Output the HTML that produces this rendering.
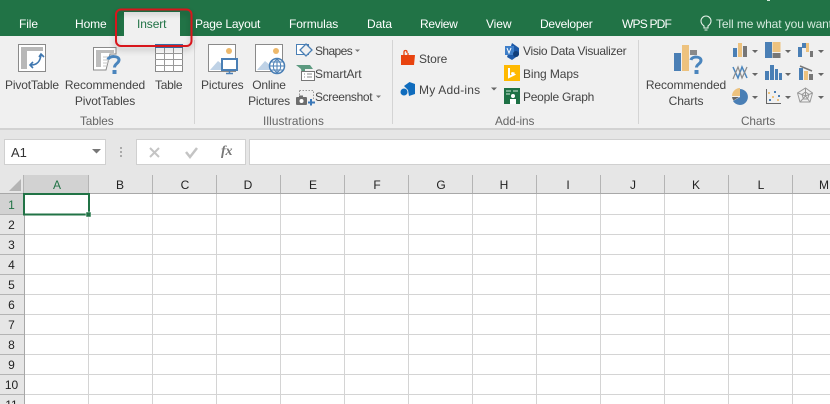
<!DOCTYPE html>
<html><head><meta charset="utf-8">
<style>
html,body{margin:0;padding:0;width:830px;height:404px;overflow:hidden}
#p{position:absolute;left:0;top:0;width:830px;height:404px;overflow:hidden;background:#e6e6e6;font-family:"Liberation Sans",sans-serif;font-size:12px;color:#444}
#p div{position:absolute}
.t{white-space:nowrap;line-height:16px;letter-spacing:-.1px}
.w{color:#fff;top:16px;font-size:12px}
.c{text-align:center}
.g{color:#666;top:113px;font-size:11.8px}
.h{top:176px;height:18px;line-height:18px;width:64px;text-align:center;color:#222;font-size:12px}
.r{left:0;width:23px;height:20px;line-height:23px;text-align:center;color:#222;font-size:12px}
svg{position:absolute;left:0;top:0}
</style></head><body><div id="p">
<div style="left:0;top:0;width:830px;height:36px;background:#217346"></div>
<div style="left:0;top:36px;width:830px;height:92px;background:#f0f0f0"></div>
<div style="left:0;top:128px;width:830px;height:2px;background:#d2d2d2"></div>
<div style="left:124px;top:12px;width:56px;height:24px;background:#f0f0f0"></div>
<div style="left:194px;top:40px;width:1px;height:84px;background:#d4d4d4"></div>
<div style="left:392px;top:40px;width:1px;height:84px;background:#d4d4d4"></div>
<div style="left:638px;top:40px;width:1px;height:84px;background:#d4d4d4"></div>

<div class="t w" style="left:19px">File</div>
<div class="t w" style="left:75px">Home</div>
<div class="t w" style="left:137px;color:#217346">Insert</div>
<div class="t w" style="left:195px;letter-spacing:-.2px">Page Layout</div>
<div class="t w" style="left:289px">Formulas</div>
<div class="t w" style="left:367px">Data</div>
<div class="t w" style="left:420px;letter-spacing:-.3px">Review</div>
<div class="t w" style="left:486px">View</div>
<div class="t w" style="left:540px;letter-spacing:-.25px">Developer</div>
<div class="t w" style="left:622px;letter-spacing:-.8px">WPS PDF</div>
<div class="t w" style="left:716px;color:#d5eadd">Tell me what you want</div>

<div class="t" style="left:5px;top:77px;letter-spacing:-.15px">PivotTable</div>
<div class="t c" style="left:60px;top:77px;width:90px">Recommended<br>PivotTables</div>
<div class="t" style="left:155px;top:77px;letter-spacing:-.3px">Table</div>
<div class="t" style="left:201px;top:77px">Pictures</div>
<div class="t c" style="left:243px;top:77px;width:52px;letter-spacing:-.2px">Online<br>Pictures</div>
<div class="t" style="left:315px;top:43px;letter-spacing:-.6px">Shapes</div>
<div class="t" style="left:315px;top:66px">SmartArt</div>
<div class="t" style="left:315px;top:89px;letter-spacing:-.35px">Screenshot</div>
<div class="t" style="left:419px;top:51px">Store</div>
<div class="t" style="left:419px;top:82px;letter-spacing:.2px">My Add-ins</div>
<div class="t" style="left:523px;top:43px;letter-spacing:-.3px">Visio Data Visualizer</div>
<div class="t" style="left:523px;top:66px">Bing Maps</div>
<div class="t" style="left:523px;top:89px;letter-spacing:-.25px">People Graph</div>
<div class="t c" style="left:640px;top:77px;width:92px">Recommended<br>Charts</div>

<div class="t g" style="left:80px">Tables</div>
<div class="t g" style="left:263px;letter-spacing:.1px">Illustrations</div>
<div class="t g" style="left:495px">Add-ins</div>
<div class="t g" style="left:741px">Charts</div>

<!-- formula bar -->
<div style="left:4px;top:139px;width:100px;height:24px;background:#fff;border:1px solid #d0d0d0"></div>
<div class="t" style="left:11px;top:145px;font-size:13px;color:#333">A1</div>
<div style="left:136px;top:139px;width:108px;height:24px;background:#fff;border:1px solid #d0d0d0"></div>
<div style="left:249px;top:139px;width:581px;height:24px;background:#fff;border-top:1px solid #d0d0d0;border-bottom:1px solid #d0d0d0;border-left:1px solid #d0d0d0"></div>
<div class="t" style="left:221px;top:144px;font:italic bold 14px 'Liberation Serif',serif;color:#777">fx</div>

<!-- grid -->
<div style="left:0;top:175px;width:830px;height:19px;background:#e6e6e6"></div>
<div style="left:24px;top:175px;width:64px;height:19px;background:#d2d2d2"></div>
<div style="left:0;top:194px;width:24px;height:210px;background:#e6e6e6"></div>
<div style="left:0;top:194px;width:24px;height:20px;background:#d2d2d2"></div>
<div style="left:24px;top:194px;width:806px;height:210px;background:#fff"></div>

<div class="h" style="left:25px;color:#217346">A</div>
<div class="h" style="left:88px">B</div>
<div class="h" style="left:153px">C</div>
<div class="h" style="left:216px">D</div>
<div class="h" style="left:281px">E</div>
<div class="h" style="left:345px">F</div>
<div class="h" style="left:409px">G</div>
<div class="h" style="left:472px">H</div>
<div class="h" style="left:536px">I</div>
<div class="h" style="left:601px">J</div>
<div class="h" style="left:664px">K</div>
<div class="h" style="left:729px">L</div>
<div class="h" style="left:792px">M</div>

<div class="r" style="top:194px;color:#217346">1</div>
<div class="r" style="top:214px">2</div>
<div class="r" style="top:234px">3</div>
<div class="r" style="top:254px">4</div>
<div class="r" style="top:274px">5</div>
<div class="r" style="top:294px">6</div>
<div class="r" style="top:314px">7</div>
<div class="r" style="top:334px">8</div>
<div class="r" style="top:354px">9</div>
<div class="r" style="top:374px">10</div>
<div class="r" style="top:394px">11</div>

<svg width="830" height="404" viewBox="0 0 830 404" fill="none">
<defs><filter id="s" x="-20%" y="-30%" width="140%" height="160%"><feDropShadow dx="0" dy="3" stdDeviation="3" flood-color="#000" flood-opacity=".3"/></filter></defs>

<!-- grid lines -->
<g stroke="#d4d4d4" stroke-width="1">
<path d="M88.500 194V404M152.500 194V404M216.500 194V404M280.500 194V404M344.500 194V404M408.500 194V404M472.500 194V404M536.500 194V404M600.500 194V404M664.500 194V404M728.500 194V404M792.500 194V404"/>
<path d="M24 214.500H830M24 234.500H830M24 254.500H830M24 274.500H830M24 294.500H830M24 314.500H830M24 334.500H830M24 354.500H830M24 374.500H830M24 394.500H830"/>
</g>
<g stroke="#b4b4b4"><path d="M152.500 175V193M216.500 175V193M280.500 175V193M344.500 175V193M408.500 175V193M472.500 175V193M536.500 175V193M600.500 175V193M664.500 175V193M728.500 175V193M792.500 175V193M88.500 175V193M23.500 175V193"/>
<path d="M0 214.500H24M0 234.500H24M0 254.500H24M0 274.500H24M0 294.500H24M0 314.500H24M0 334.500H24M0 354.500H24M0 374.500H24M0 394.500H24"/></g>
<path d="M0 193.500H830" stroke="#a8a8a8"/><path d="M24.500 194V404" stroke="#a8a8a8"/>
<path d="M9 191L21 179V191Z" fill="#b4b4b4"/>
<rect x="24" y="194" width="65" height="20.500" stroke="#217346" stroke-width="2"/>
<rect x="86" y="212" width="5" height="5" fill="#217346" stroke="#fff" stroke-width=".5"/>

<!-- formula bar glyphs -->
<path d="M92 149h9l-4.500 4.500z" fill="#777"/>
<g fill="#aaa"><rect x="120" y="147" width="2" height="2"/><rect x="120" y="151" width="2" height="2"/><rect x="120" y="155" width="2" height="2"/></g>
<path d="M150 148l9 9M159 148l-9 9" stroke="#c4c4c4" stroke-width="2"/>
<path d="M186 152l4 5 7-9" stroke="#c4c4c4" stroke-width="2.500"/>

<!-- pivot table -->
<rect x="18.500" y="44.500" width="27" height="27" fill="#fff" stroke="#8a8a8a"/>
<path d="M21 47h22v4H27v18h-6z" fill="#b8b8b8"/>
<path d="M31 65c6 0 9-3 10-10M39 57l2-3 3 3M33 62l-3 3 3 3" stroke="#3f77b0" stroke-width="1.600"/>

<!-- recommended pivot -->
<path d="M93.500 47.500H116V54H110L106 70H93.500Z" fill="#fff" stroke="#8a8a8a"/>
<path d="M96 50h18v3H101v14h-5z" fill="#bdbdbd"/><path d="M103 57h8M103 60h6M103 63h5M103 66h3" stroke="#c4c4c4"/>
<path d="M108 59.500c1-4 11-4 11 0.500c0 3.500-4.500 3.500-4.500 7.500" stroke="#4a85bd" stroke-width="3"/>
<rect x="112.500" y="70" width="4" height="4" fill="#4a85bd"/>

<!-- table -->
<rect x="155.500" y="44.500" width="27" height="27" fill="#fff" stroke="#8a8a8a"/>
<rect x="155" y="44" width="28" height="4" fill="#3b6ea5"/>
<path d="M155 53.500H183M155 59.500H183M155 65.500H183M164.500 48V72M173.500 48V72" stroke="#9a9a9a"/>

<!-- pictures -->
<rect x="208.500" y="44.500" width="27" height="27" fill="#fff" stroke="#8a8a8a"/>
<circle cx="229" cy="51" r="3" fill="#edb96c"/>
<path d="M210 70l8-9 5 4 3-2 6 7z" fill="#bfd2e6"/>
<rect x="222" y="59" width="15" height="11" fill="#fff" stroke="#4a7fb5" stroke-width="2"/>
<path d="M229.500 71v2M226 73.500h7" stroke="#4a7fb5" stroke-width="1.500"/>
<!-- online pictures -->
<rect x="255.500" y="44.500" width="27" height="27" fill="#fff" stroke="#8a8a8a"/>
<circle cx="276" cy="51" r="3" fill="#edb96c"/>
<path d="M257 70l8-9 5 4 3-2 6 7z" fill="#bfd2e6"/>
<circle cx="277" cy="66" r="7.500" fill="#fff" stroke="#4a7fb5" stroke-width="1.500"/>
<path d="M270 66h14M271 62h12M271 70h12M277 59v14M277 59c-5 4-5 10 0 14M277 59c5 4 5 10 0 14" stroke="#4a7fb5"/>

<!-- shapes -->
<rect x="296.500" y="44.500" width="12" height="10" stroke="#4a7fb5" fill="#fff"/>
<path d="M306 44l6 6-6 6-6-6z" stroke="#4a7fb5" fill="#f0f0f0" stroke-width="1.300"/>
<path d="M355 49.500h5l-2.500 2.500z" fill="#777"/>
<!-- smartart -->
<path d="M296 65h14l3 4h-8v5h-3l-1-5z" fill="#5c9a80"/>
<rect x="301.500" y="71.500" width="13" height="9" fill="#fff" stroke="#777"/>
<path d="M304 74h1M304 77h1M307 74h5M307 77h5" stroke="#888"/>
<!-- screenshot -->
<path d="M299.500 90.500H313.500V100" stroke="#999" stroke-dasharray="1.500 1.500"/><path d="M299.500 90.500V96" stroke="#999" stroke-dasharray="1.500 1.500"/>
<rect x="296" y="97" width="11" height="8" rx="1" fill="#6e6e6e"/><rect x="299" y="95.500" width="4" height="2" fill="#6e6e6e"/>
<circle cx="301.500" cy="101" r="2" fill="#fff"/>
<path d="M311 99v6.500M308 102.500h7" stroke="#3b78b8" stroke-width="2"/>
<path d="M376 95.500h5l-2.500 2.500z" fill="#777"/>
<path d="M491 87.500h6l-3 3z" fill="#666"/>

<!-- store -->
<path d="M401 55h14l-1 10h-13z" fill="#e8430f"/>
<path d="M404 55v-3c0-2 3-2 3 0v1M408 55v-2" stroke="#e8430f" stroke-width="1.300"/>
<!-- my addins -->
<path d="M404 86l5.500-4 5.500 2v10l-6 2-1-6z" fill="#0f6cbd"/>
<circle cx="404" cy="92" r="3.500" fill="#0f6cbd"/>
<!-- visio -->
<path d="M512 43l7 5v7l-7 5-5-3z" fill="#1e5aa8"/><rect x="505" y="46" width="9" height="9" fill="#3f7fc9"/>
<path d="M507 48l2 5 2-5" stroke="#fff"/><circle cx="516" cy="54" r="3" fill="#123f7a"/>
<!-- bing -->
<rect x="504" y="65" width="16" height="16" fill="#ffb900"/>
<path d="M509 68v9l5-2.500-2.500-1.500 3 .5" stroke="#fff" stroke-width="2"/>
<!-- people graph -->
<rect x="504" y="88" width="16" height="16" fill="#1e7145"/>
<path d="M506 91h5M506 94h4M513 91h5" stroke="#cfe6d8"/>
<circle cx="513" cy="96" r="2" fill="#fff"/><path d="M510 104v-5h6v5z" fill="#fff"/>

<!-- recommended charts -->
<rect x="674" y="53" width="7" height="18" fill="#4a7fb5"/>
<rect x="682" y="45" width="7" height="26" fill="#edc27e"/>
<rect x="690" y="50" width="7" height="5" fill="#8a8a8a"/>
<path d="M691 60c1-4 10-4 10 .500c0 3.500-4.500 3.500-4.500 7" stroke="#4a85bd" stroke-width="3"/>
<rect x="694.500" y="70" width="4" height="4" fill="#4a85bd"/>

<!-- charts -->
<rect x="733" y="48" width="4" height="9" fill="#4a7fb5"/><rect x="738" y="43" width="4" height="14" fill="#edc27e"/><rect x="743" y="46" width="4" height="11" fill="#777"/>
<rect x="765" y="42" width="7" height="16" fill="#4a7fb5"/><rect x="772.500" y="42" width="8" height="10" fill="#edc27e"/><rect x="772.500" y="53" width="8" height="5" fill="#777"/>
<path d="M798 47h4v10h-4z" fill="#4a7fb5"/><rect x="802" y="43" width="4" height="5" fill="#4a7fb5"/><rect x="806" y="43" width="3" height="9" fill="#edc27e"/><rect x="810" y="51" width="3" height="6" fill="#777"/>

<path d="M733 67l5 11 4-11 5 11" stroke="#4a85bd" stroke-width="1.500"/><path d="M733 79l5-12 4 11 5-11" stroke="#8a8a8a" stroke-width="1.200"/>
<rect x="765" y="71" width="4" height="9" fill="#4a7fb5"/><rect x="770" y="65" width="4" height="15" fill="#4a7fb5"/><rect x="775" y="69" width="3" height="11" fill="#4a7fb5"/><rect x="779" y="73" width="3" height="7" fill="#4a7fb5"/>
<rect x="799" y="68" width="4" height="12" fill="#4a7fb5"/><rect x="804" y="71" width="4" height="9" fill="#edc27e"/><rect x="809" y="74" width="4" height="6" fill="#777"/>
<path d="M800 66l12 5" stroke="#777" stroke-width="1.500"/>

<path d="M740 89a8 8 0 1 1-7 12l7-4z" fill="#4a7fb5"/><path d="M740 88v8h-8a8 8 0 0 1 8-8z" fill="#edc27e"/><path d="M732 97h7l-5.500 3.500a8 8 0 0 1-1.500-3.500z" fill="#666"/>
<path d="M766.500 89v14.500H781" stroke="#666"/>
<g fill="#edc27e"><rect x="768" y="92" width="2" height="2"/><rect x="772" y="96" width="2" height="2"/><rect x="777" y="99" width="2" height="2"/></g>
<g fill="#4a7fb5"><rect x="774" y="91" width="2" height="2"/><rect x="769" y="99" width="2" height="2"/><rect x="778" y="95" width="2" height="2"/></g>
<path d="M805.500 88l7 5-2.500 9h-10l-2.500-9zM805.500 92l3.500 2.500-1.500 4.500h-4l-1.500-4.500zM805.500 88v8M798 93l7.500 3 7-3M800 102l5.500-6 4.500 6" stroke="#999"/>

<!-- dropdown carets -->
<g fill="#666">
<path d="M752 50h6l-3 3zM785 50h6l-3 3zM818 50h6l-3 3zM752 73h6l-3 3zM785 73h6l-3 3zM818 73h6l-3 3zM752 96h6l-3 3zM785 96h6l-3 3zM818 96h6l-3 3z"/>
</g>

<!-- lightbulb -->
<path d="M701 28v-2c-2-1.500-3-3-3-5a5 5 0 0 1 10 0c0 2-1 3.500-3 5v2zM701.500 30h3" stroke="#e4f0e8" transform="translate(3 0)" stroke-width="1.100"/>

<rect x="767" y="0" width="3" height="1" fill="#d5eadd"/>

<!-- red annotation -->
<rect x="116" y="9.500" width="75.500" height="36.500" rx="5" stroke="#d8141e" stroke-width="2" filter="url(#s)"/>
</svg>
</div></body></html>
